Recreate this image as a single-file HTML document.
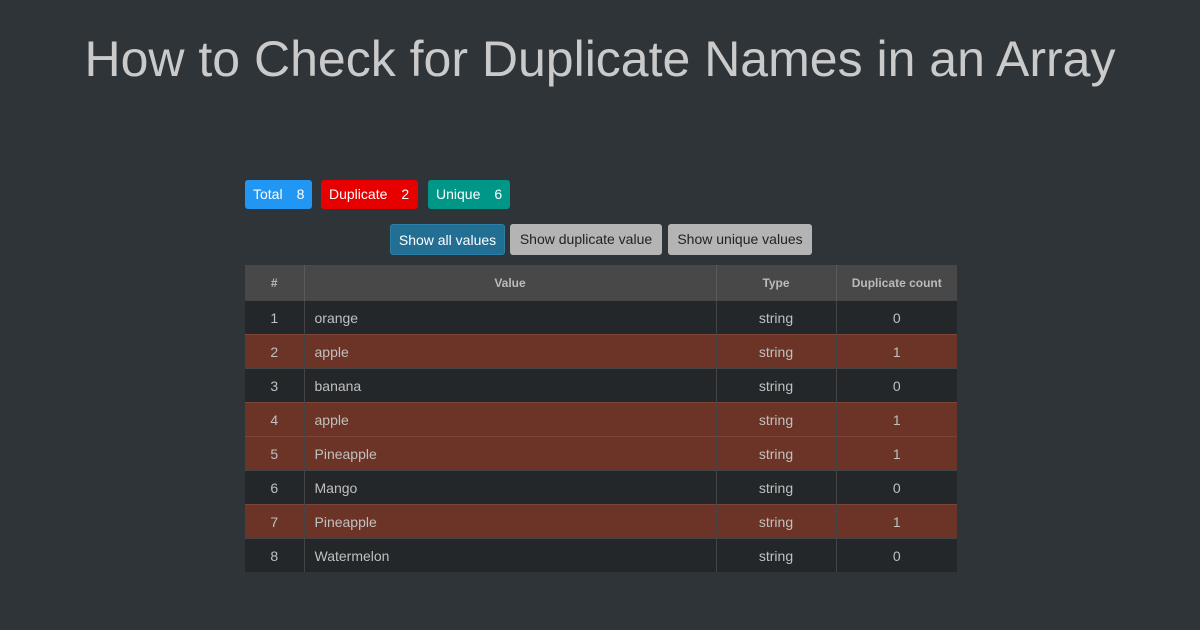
<!DOCTYPE html>
<html><head><meta charset="utf-8"><style>
body{margin:0;width:1200px;height:630px;background:#2e3437;font-family:"Liberation Sans",sans-serif;overflow:hidden;position:relative}
h1{position:absolute;top:30px;left:0;width:1200px;text-align:center;margin:0;font-weight:normal;font-size:50px;color:#cacaca;letter-spacing:0px}
.badge{position:absolute;top:180px;height:29px;border-radius:3px;color:#fff;font-size:14px;line-height:29px;padding:0 8px;box-sizing:border-box}
.badge b{font-weight:normal;margin-left:14px}
.btn{position:absolute;top:224px;height:31px;border-radius:3px;font-size:14px;line-height:31px;text-align:center;box-sizing:border-box}
table{position:absolute;left:245px;top:265px;width:712px;border-collapse:collapse;font-size:14px;color:#c0c0c0}
th{background:#484848;height:35px;font-size:12px;color:#bbb;border-right:1px solid #5a5a5a;padding:0}
td{height:33px;border-top:1px solid #444;border-right:1px solid #444;text-align:center;padding:0}
td:nth-child(2){text-align:left;padding-left:10px}
th:last-child,td:last-child{border-right:none}
tr.n td{background:#232729}
tr.d td{background:#6b3427;border-top-color:#7b4437}
</style></head><body>
<h1>How to Check for Duplicate Names in an Array</h1>
<div class="badge" style="left:245px;width:67px;background:#2196f3">Total<b>8</b></div>
<div class="badge" style="left:321px;width:97px;background:#e60000">Duplicate<b>2</b></div>
<div class="badge" style="left:428px;width:82px;background:#009688">Unique<b>6</b></div>
<div class="btn" style="left:390px;width:115px;background:#236e93;color:#fff;border:1px solid #2a80a8">Show all values</div>
<div class="btn" style="left:510px;width:152px;background:#b4b4b4;color:#222">Show duplicate value</div>
<div class="btn" style="left:668px;width:144px;background:#b4b4b4;color:#222">Show unique values</div>
<table>
<colgroup><col style="width:59px"><col style="width:412px"><col style="width:120px"><col style="width:121px"></colgroup>
<tr><th>#</th><th>Value</th><th>Type</th><th>Duplicate count</th></tr>
<tr class="n"><td>1</td><td>orange</td><td>string</td><td>0</td></tr>
<tr class="d"><td>2</td><td>apple</td><td>string</td><td>1</td></tr>
<tr class="n"><td>3</td><td>banana</td><td>string</td><td>0</td></tr>
<tr class="d"><td>4</td><td>apple</td><td>string</td><td>1</td></tr>
<tr class="d"><td>5</td><td>Pineapple</td><td>string</td><td>1</td></tr>
<tr class="n"><td>6</td><td>Mango</td><td>string</td><td>0</td></tr>
<tr class="d"><td>7</td><td>Pineapple</td><td>string</td><td>1</td></tr>
<tr class="n"><td>8</td><td>Watermelon</td><td>string</td><td>0</td></tr>
</table>
</body></html>
